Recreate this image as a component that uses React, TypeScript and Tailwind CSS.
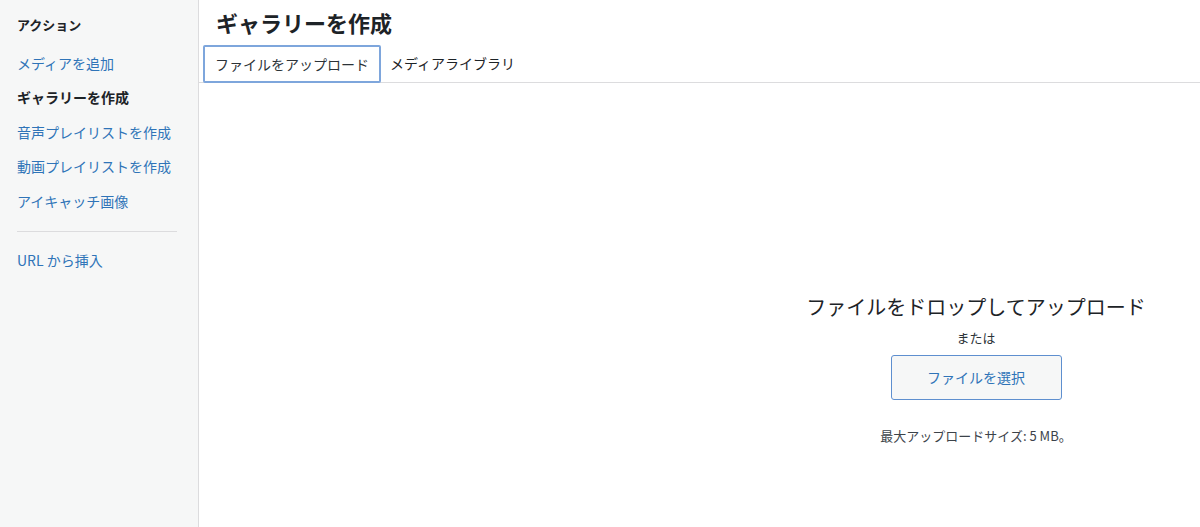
import React from 'react';

const menuItems = [
  { label: 'メディアを追加', active: false },
  { label: 'ギャラリーを作成', active: true },
  { label: '音声プレイリストを作成', active: false },
  { label: '動画プレイリストを作成', active: false },
  { label: 'アイキャッチ画像', active: false },
];

const font = { fontFamily: '"Noto Sans CJK JP", "Noto Sans", "Liberation Sans", sans-serif' };

export default function App() {
  return (
    <div className="flex h-[527px] w-[1200px] bg-white text-[#1d2327]" style={font}>
      {/* Sidebar menu */}
      <aside className="w-[199px] shrink-0 bg-[#f6f7f7] border-r border-[#dcdcde] pl-[17px] pr-[21px] pt-[16px]">
        <h2 className="text-[13px] leading-[18px] font-bold text-[#1d2327] mb-[12px]">アクション</h2>
        <nav className="flex flex-col">
          {menuItems.map((item) => (
            <a
              key={item.label}
              className={`h-[34.5px] flex items-center text-[14px] ${
                item.active ? 'font-bold text-[#1d2327]' : 'text-[#2f74b8]'
              }`}
            >
              {item.label}
            </a>
          ))}
        </nav>
        <div className="h-px bg-[#dcdcde] mt-[12px] mb-[12px]" />
        <a className="h-[34.5px] flex items-center text-[14px] text-[#2f74b8]">URL から挿入</a>
      </aside>

      {/* Main frame */}
      <main className="flex-1 flex flex-col">
        <h1 className="pl-[17px] pt-[7px] text-[22px] leading-[30px] font-bold text-[#1d2327]">
          ギャラリーを作成
        </h1>

        {/* Router tabs */}
        <div className="mt-[8px] flex items-stretch border-b border-[#dcdcde] pl-[4px] h-[38px]">
          <button className="px-[10px] text-[14px] text-[#2c3338] border-2 border-[#7ea6dc] rounded-[2px] -mb-px">
            ファイルをアップロード
          </button>
          <button className="pl-[9px] text-[14px] text-[#1d2327]">メディアライブラリ</button>
        </div>

        {/* Uploader */}
        <div className="flex-1 flex justify-end">
          <div className="w-[448px] flex flex-col items-center pt-[210px]">
            <p className="text-[20px] leading-[28px] text-[#1d2327]">ファイルをドロップしてアップロード</p>
            <p className="mt-[8px] text-[13px] leading-[18px] text-[#2c3338]">または</p>
            <button className="mt-[8px] w-[171px] h-[45px] rounded-[3px] border border-[#5e8fcf] bg-[#f6f7f7] text-[14px] text-[#2f74b8]">
              ファイルを選択
            </button>
            <p className="mt-[27px] text-[13px] leading-[18px] text-[#3c434a]">最大アップロードサイズ: 5 MB。</p>
          </div>
        </div>
      </main>
    </div>
  );
}
